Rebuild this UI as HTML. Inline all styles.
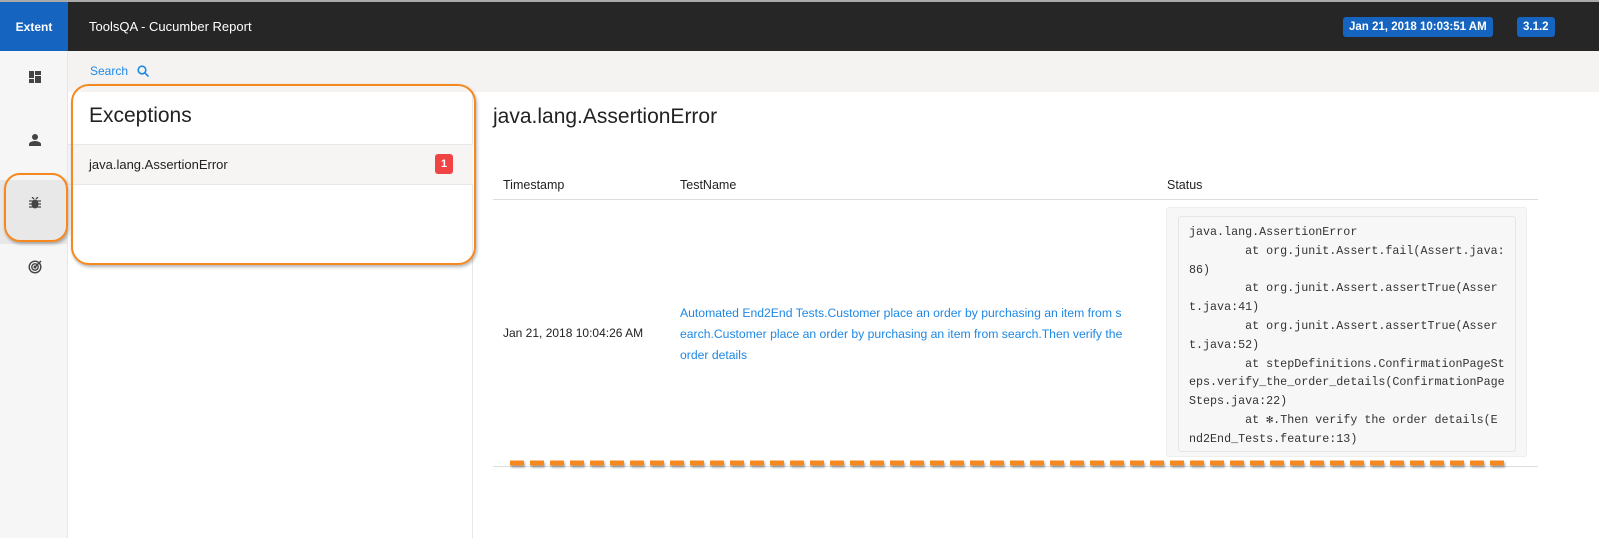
<!DOCTYPE html>
<html><head><meta charset="utf-8"><style>
*{margin:0;padding:0;box-sizing:border-box}
body{width:1599px;height:538px;overflow:hidden;background:#fff;font-family:"Liberation Sans",sans-serif;position:relative;color:#222}
.abs{position:absolute}
.hdr{left:0;top:0;width:1599px;height:51px;background:#262626;border-top:2px solid #aaa}
.logo{left:0;top:2px;width:68px;height:49px;background:#1565c0;color:#fff;font-size:12px;font-weight:bold;display:flex;align-items:center;justify-content:center}
.title{left:89px;top:19px;color:#fff;font-size:13px}
.badge{background:#1565c0;color:#fff;font-size:11.5px;font-weight:bold;border-radius:3px;height:20px;line-height:20px;padding:0 6px;top:17px}
.side{left:0;top:51px;width:68px;height:487px;background:#f6f6f6;border-right:1px solid #e6e6e6}
.sbar{left:68px;top:51px;width:1531px;height:41px;background:#f4f3f1}
.pre{font-family:"Liberation Mono",monospace;font-size:11.7px;line-height:18.8px;color:#333;white-space:pre}
</style></head><body>
<div class="abs hdr"></div>
<div class="abs logo">Extent</div>
<div class="abs title">ToolsQA - Cucumber Report</div>
<div class="abs badge" style="left:1343px">Jan 21, 2018 10:03:51 AM</div>
<div class="abs badge" style="left:1517px">3.1.2</div>
<div class="abs side"></div>
<div class="abs" style="left:0;top:180px;width:68px;height:64px;background:#e8e8e8"></div>
<svg class="abs" style="left:29px;top:71px" width="12" height="12" viewBox="0 0 12 12"><rect x="0" y="0" width="5" height="7" fill="#444"/><rect x="0" y="8" width="5" height="4" fill="#444"/><rect x="6" y="0" width="6" height="4" fill="#444"/><rect x="6" y="5" width="6" height="7" fill="#444"/></svg>
<svg class="abs" style="left:29px;top:134px" width="12" height="12" viewBox="0 0 12 12"><circle cx="6" cy="3" r="3" fill="#444"/><path d="M0 12v-2c0-2 4-3 6-3s6 1 6 3v2z" fill="#444"/></svg>
<svg class="abs" style="left:29px;top:197px" width="12" height="12" viewBox="0 0 12 12"><ellipse cx="6" cy="7" rx="3.5" ry="4.5" fill="#444"/><path d="M0 4h12M0 7h12M0 10h12M3 0l2 2M9 0l-2 2" stroke="#444" stroke-width="1.3"/></svg>
<svg class="abs" style="left:28px;top:260px" width="14" height="14" viewBox="0 0 14 14" fill="none" stroke="#444" stroke-width="1.4"><circle cx="7" cy="7" r="5.8"/><circle cx="7" cy="7" r="3.2"/><circle cx="7" cy="7" r="0.8" fill="#444"/><path d="M7 7L13 1"/></svg>
<div class="abs sbar"></div>
<div class="abs" style="left:90px;top:64px;font-size:12px;color:#1e88e5">Search</div>
<svg class="abs" style="left:137px;top:65px" width="12" height="12" viewBox="0 0 12 12" fill="none" stroke="#1e88e5" stroke-width="1.6"><circle cx="5" cy="5" r="3.8"/><path d="M8 8l3.5 3.5"/></svg>
<div class="abs" style="left:68px;top:92px;width:405px;height:446px;background:#fff;border-right:1px solid #e8e8e8"></div>
<div class="abs" style="left:89px;top:104px;font-size:21px;color:#222">Exceptions</div>
<div class="abs" style="left:68px;top:144px;width:405px;height:41px;background:#f6f5f4;border-top:1px solid #e8e8e8;border-bottom:1px solid #e8e8e8"></div>
<div class="abs" style="left:89px;top:157px;font-size:13px;color:#222">java.lang.AssertionError</div>
<div class="abs" style="left:435px;top:154px;width:18px;height:20px;background:#f04444;color:#fff;font-size:11px;font-weight:bold;border-radius:3px;text-align:center;line-height:20px">1</div>
<div class="abs" style="left:493px;top:105px;font-size:21px;color:#222">java.lang.AssertionError</div>
<div class="abs" style="left:503px;top:178px;font-size:12.5px">Timestamp</div>
<div class="abs" style="left:680px;top:178px;font-size:12.5px">TestName</div>
<div class="abs" style="left:1167px;top:178px;font-size:12.5px">Status</div>
<div class="abs" style="left:493px;top:199px;width:1045px;height:1px;background:#ddd"></div>
<div class="abs" style="left:493px;top:466px;width:1045px;height:1px;background:#ddd"></div>
<div class="abs" style="left:503px;top:326px;font-size:12px">Jan 21, 2018 10:04:26 AM</div>
<div class="abs" style="left:680px;top:303px;width:470px;font-size:12.2px;line-height:21px;color:#1e88e5">Automated End2End Tests.Customer place an order by purchasing an item from s<br>earch.Customer place an order by purchasing an item from search.Then verify the<br>order details</div>
<div class="abs" style="left:1166px;top:207px;width:361px;height:250px;background:#f7f7f7;border:1px solid #eee;border-radius:3px"></div>
<div class="abs" style="left:1178px;top:216px;width:338px;height:236px;background:#f7f7f7;border:1px solid #e6e6e6;border-radius:3px"></div>
<div class="abs pre" style="left:1189px;top:223px">java.lang.AssertionError
        at org.junit.Assert.fail(Assert.java:
86)
        at org.junit.Assert.assertTrue(Asser
t.java:41)
        at org.junit.Assert.assertTrue(Asser
t.java:52)
        at stepDefinitions.ConfirmationPageSt
eps.verify_the_order_details(ConfirmationPage
Steps.java:22)
        at ✻.Then verify the order details(E
nd2End_Tests.feature:13)</div>
<svg class="abs" style="left:508px;top:458px;filter:drop-shadow(1px 2px 1px rgba(0,0,0,.35))" width="1004" height="10"><line x1="2" y1="5" x2="1002" y2="5" stroke="#f5891f" stroke-width="5" stroke-dasharray="14 6"/></svg>
<div class="abs" style="left:71px;top:84px;width:405px;height:181px;border:2px solid #f5891f;border-radius:18px;box-shadow:1px 2px 3px rgba(0,0,0,.3)"></div>
<div class="abs" style="left:4px;top:173px;width:64px;height:69px;border:2px solid #f5891f;border-radius:16px;box-shadow:1px 2px 3px rgba(0,0,0,.3)"></div>
</body></html>
